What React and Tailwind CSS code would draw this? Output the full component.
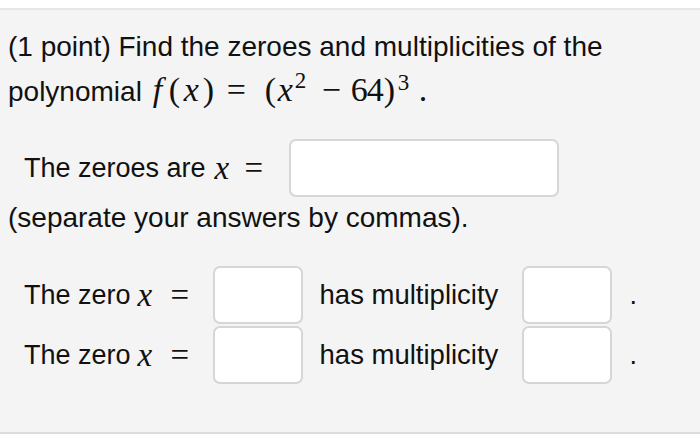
import React from "react";

const sans = { fontFamily: '"Liberation Sans", Arial, sans-serif' };
const serif = { fontFamily: '"Liberation Serif", "DejaVu Serif", serif' };

function Box({ w }) {
    return <div className={`${w} h-[58px] shrink-0 rounded-[7px] border-2 border-[#d6d6d6] bg-white`} />;
}

// f(x) = (x^2 - 64)^3, spaced out like the typeset math
function Formula() {
    return (
        <span className="text-[34px] leading-none ml-[11px] whitespace-nowrap" style={serif}>
            <span className="inline-block w-[16px]"><i>f</i></span>
            <span className="inline-block w-[11px]">(</span>
            <span className="inline-block w-[23px] pl-[4px]"><i>x</i></span>
            <span className="inline-block w-[24px]">)</span>
            <span className="inline-block w-[38px]">=</span>
            <span className="inline-block w-[10px]">(</span>
            <span className="inline-block w-[20px] pl-[3px]"><i>x</i></span>
            <span className="inline-block w-[27px] text-[23px] align-[13px]">2</span>
            <span className="inline-block w-[29px]">−</span>
            <span className="inline-block w-[33px] tracking-[-1px]">64</span>
            <span className="inline-block w-[14px]">)</span>
            <span className="inline-block w-[21px] text-[23px] align-[11px]">3</span>
            <span>.</span>
        </span>
    );
}

export default function App() {
    return (
        <div className="w-[700px] h-[442px] bg-white text-[#111] overflow-hidden" style={sans}>
            <div className="h-[8px] bg-white" />
            <div className="h-[426px] bg-[#f4f4f4] border-t-2 border-[#e6e6e6] border-b-2 border-b-[#dddddd] pl-[8px]">
                <div className="pt-[15px] text-[28px] leading-[44px]">
                    <div>(1 point) Find the zeroes and multiplicities of the</div>
                    <div className="h-[44px] flex items-baseline">
                        <span>polynomial</span>
                        <Formula />
                    </div>
                </div>

                <div className="mt-[26px] pl-[16px] flex items-center text-[27px]">
                    <span>The zeroes are</span>
                    <span className="flex items-center text-[33px] leading-none" style={serif}>
                        <i className="ml-[9px] inline-block w-[30px]">x</i>
                        <span className="inline-block w-[44px]">=</span>
                    </span>
                    <Box w="w-[270px]" />
                </div>

                <div className="text-[28px] leading-[42px]">(separate your answers by commas).</div>

                <div className="mt-[27px] pl-[16px] flex flex-col gap-[2px] text-[27px]">
                    {[0, 1].map((i) => (
                        <div key={i} className="flex items-center">
                            <span>The zero</span>
                            <span className="flex items-center text-[33px] leading-none" style={serif}>
                                <i className="ml-[7px] inline-block w-[33px]">x</i>
                                <span className="inline-block w-[42px]">=</span>
                            </span>
                            <Box w="w-[90px]" />
                            <span className="ml-[17px] inline-block w-[202px] text-[27.5px]">has multiplicity</span>
                            <Box w="w-[90px]" />
                            <span className="ml-[18px]">.</span>
                        </div>
                    ))}
                </div>
            </div>
        </div>
    );
}
